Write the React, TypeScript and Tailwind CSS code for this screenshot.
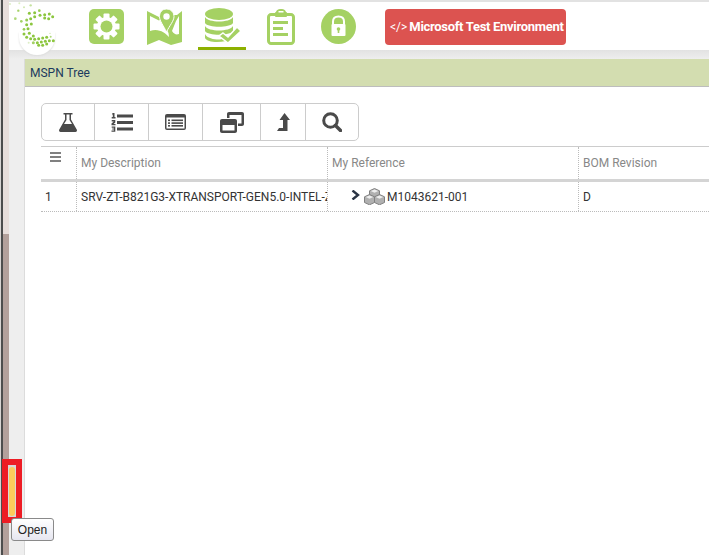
const G = "#a5d163";
const D = "#4a4a4a";

const dots: [number, number, number, number][] = [
  [30,12,3,.3],[58,10,3,.3],[72,22,3,.4],[92,16,3.5,.5],[55,32,3.5,.8],[88,40,4.5,1],[104,38,4.5,1],[118,32,4,.9],[134,44,4.5,1],[148,42,4.5,1],[158,50,4.5,1],
  [46,56,4,.7],[64,64,4,.8],[80,60,4.5,.9],[92,56,4.5,1],[104,50,4.5,1],[120,46,4.5,1],[134,54,4.5,1],[146,56,4.5,1],[80,74,4.5,1],[94,72,4.5,1],[84,86,4.5,1],[72,88,4,.9],[72,102,4.5,1],
  [88,100,4.5,1],[100,108,4.5,1],[80,112,4.5,1],[92,116,4.5,1],[104,118,4.5,1],[116,116,4.5,1],[128,114,4.5,1],[140,112,4.5,1],[152,110,3,.7],[160,122,4.5,1],[148,122,4.5,1],
  [136,124,4.5,1],[124,126,4.5,1],[112,128,4.5,1],[100,128,4.5,.8],[128,136,4.5,1],[116,136,4.5,1],[140,132,4.5,1],[150,100,2,.5],[86,128,3,.3],
];

function Logo() {
  return (
    <svg width="70" height="70" viewBox="0 0 210 210" className="absolute left-[-9px] top-[-2px]">
      {dots.map(([x, y, r, o], i) => <circle key={i} cx={x} cy={y} r={r} fill="#8cc63f" opacity={o} />)}
    </svg>
  );
}

function Gear() {
  const teeth = [0, 45, 90, 135];
  return (
    <svg width="35" height="35" viewBox="0 0 35 35">
      <rect width="35" height="35" rx="5" fill={G} />
      {teeth.map((a) => <rect key={a} x="14.500" y="4.500" width="6" height="26" rx="1" fill="#fff" transform={`rotate(${a} 17.5 17.5)`} />)}
      <circle cx="17.500" cy="17.500" r="9.500" fill="#fff" />
      <circle cx="17.500" cy="17.500" r="6" fill={G} />
    </svg>
  );
}

function MapIcon() {
  return (
    <svg width="36" height="36" viewBox="0 0 36 36">
      <path d="M0 2 L12 8 L16 6 L30 6 L35 2 V33 L24 36 L12 31 L0 36 Z" fill={G} />
      <path d="M3 7 L12 11.500 L15 9.500 C16 14 19 19 21.500 24 L22 28 C18 24 12 19 3 22 Z" fill="#fff" />
      <path d="M25 22 L29 12 L32 7 V25 C29 26 27 25 25 22 Z" fill="#fff" />
      <path d="M19.500 0 C15 0 12.500 3.500 12.500 7.500 C12.500 12 16.500 16.500 19.500 23 C22.500 16.500 27 12 27 7.500 C27 3.500 24 0 19.500 0 Z" fill={G} stroke="#fff" strokeWidth="1" />
      <circle cx="19.500" cy="7.500" r="3.200" fill="#fff" />
    </svg>
  );
}

function Db() {
  return (
    <svg width="36" height="35" viewBox="0 0 36 35">
      <ellipse cx="14" cy="6" rx="14" ry="6" fill={G} />
      <path d="M0 9 C3 15 25 15 28 9 V15 C25 20 3 20 0 15 Z" fill={G} />
      <path d="M0 18 C3 24 25 24 28 18 V23 C25 28 3 28 0 23 Z" fill={G} />
      <path d="M0 26 C3 32 15 32 18 31 L21 33 C12 35 2 34 0 30 Z" fill={G} />
      <path d="M18 25 L23 29 L32 19 L36 23 L23 35 L14 28 Z" fill={G} stroke="#fff" strokeWidth="1.500" />
    </svg>
  );
}

function Clip() {
  return (
    <svg width="28" height="36" viewBox="0 0 28 36">
      <path d="M4 4 H9 C9 1 11 0 14 0 C17 0 19 1 19 4 H24 C26 4 28 6 28 8 V32 C28 34 26 36 24 36 H4 C2 36 0 34 0 32 V8 C0 6 2 4 4 4 Z" fill={G} />
      <rect x="3" y="7" width="22" height="26" rx="1" fill="#fff" />
      <rect x="8" y="3" width="12" height="5" rx="1" fill={G} />
      <rect x="11.500" y="2" width="5" height="1.500" fill="#fff" />
      <rect x="6" y="12" width="15" height="3" fill={G} />
      <rect x="6" y="18" width="10" height="3" fill={G} />
      <rect x="6" y="24" width="15" height="3" fill={G} />
    </svg>
  );
}

function Lock() {
  return (
    <svg width="35" height="35" viewBox="0 0 35 35">
      <circle cx="17.500" cy="17.500" r="17.500" fill={G} />
      <path d="M12 16 V12.500 C12 9 14.500 7.500 17.500 7.500 C20.500 7.500 23 9 23 12.500 V16" fill="none" stroke="#fff" strokeWidth="2" />
      <rect x="10.500" y="15" width="14" height="12" rx="1" fill="#fff" />
      <circle cx="17.500" cy="20" r="1.800" fill={G} />
      <rect x="16.700" y="20" width="1.600" height="4" fill={G} />
    </svg>
  );
}

function Flask() {
  return (
    <svg width="18" height="19" viewBox="0 0 18 19">
      <path d="M4.500 0 H13.500 V1.500 H12 V6.500 L18 17 C18 18 17.500 19 16.500 19 H1.500 C.5 19 0 18 0 17 L6 6.500 V1.500 H4.500 Z" fill={D} />
      <path d="M7.500 1.500 H10.500 V7 L13 11 H5 L7.500 7 Z" fill="#fff" />
    </svg>
  );
}

function ListOl() {
  return (
    <svg width="22" height="19" viewBox="0 0 22 19">
      <rect x="6" y="1.500" width="16" height="3" fill={D} />
      <rect x="6" y="8" width="16" height="3" fill={D} />
      <rect x="6" y="14.500" width="16" height="3" fill={D} />
      <path d="M1.500 0 H3.500 V4 H4.500 V5.500 H.7 V4 H1.800 V1.500 H1 Z" fill={D} />
      <path d="M.7 7 H4.300 V9.500 L2.500 11 H4.500 V12.300 H.5 V10.500 L2.800 8.500 H.7 Z" fill={D} />
      <path d="M.7 13.500 H4.300 V18.800 H.5 V17.600 H2.900 V16.600 H1.200 V15.500 H2.900 V14.700 H.7 Z" fill={D} />
    </svg>
  );
}

function ListAlt() {
  return (
    <svg width="21" height="16" viewBox="0 0 21 16">
      <rect width="21" height="16" rx="2" fill={D} />
      <rect x="1.500" y="3.500" width="18" height="11" fill="#fff" />
      <rect x="3" y="5.500" width="2" height="1.600" fill={D} />
      <rect x="3" y="8.300" width="2" height="1.600" fill={D} />
      <rect x="3" y="11" width="2" height="1.600" fill={D} />
      <rect x="6.500" y="5.500" width="11.500" height="1.600" fill={D} />
      <rect x="6.500" y="8.300" width="11.500" height="1.600" fill={D} />
      <rect x="6.500" y="11" width="11.500" height="1.600" fill={D} />
    </svg>
  );
}

function Restore() {
  return (
    <svg width="24" height="21" viewBox="0 0 24 21">
      <path d="M7 2 C7 .8 7.800 0 9 0 H22 C23.200 0 24 .8 24 2 V12 C24 13.200 23.200 14 22 14 H18 V11.500 H21.500 V3 H9.500 V6 H7 Z" fill={D} />
      <path d="M2 7 H15 C16.200 7 17 7.800 17 9 V19 C17 20.200 16.200 21 15 21 H2 C.8 21 0 20.200 0 19 V9 C0 7.800 .8 7 2 7 Z M2.500 13 V18.500 H14.500 V13 Z" fill={D} />
    </svg>
  );
}

function LevelUp() {
  return (
    <svg width="13" height="18" viewBox="0 0 13 18">
      <path d="M7.500 0 L13 7 H10.500 V18 H0 L2 15 H6 V7 H2.500 Z" fill={D} />
    </svg>
  );
}

function Search() {
  return (
    <svg width="20" height="20" viewBox="0 0 20 20">
      <circle cx="8.500" cy="8.500" r="6.800" fill="none" stroke={D} strokeWidth="3" />
      <path d="M13.500 13.500 L18.500 18.500" stroke={D} strokeWidth="3.500" strokeLinecap="round" />
    </svg>
  );
}

function Cubes() {
  const cube = (x: number, y: number) => (
    <g transform={`translate(${x} ${y})`}>
      <path d="M5.500 .5 L10.500 2.800 V8.500 L5.500 10.800 L.5 8.500 V2.800 Z" fill="#b0b0b0" stroke="#808080" strokeWidth="1" />
      <path d="M5.500 1.500 L9.300 3 L5.500 4.700 L1.700 3 Z" fill="#eeeeee" />
    </g>
  );
  return (
    <svg width="21" height="17" viewBox="0 0 21 17">
      {cube(5, 0)}
      {cube(0, 6)}
      {cube(10, 6)}
    </svg>
  );
}

const tools = [
  { w: "w-[53px]", icon: <Flask /> },
  { w: "w-[54px]", icon: <ListOl /> },
  { w: "w-[54px]", icon: <ListAlt /> },
  { w: "w-[58px]", icon: <Restore /> },
  { w: "w-[45px]", icon: <LevelUp /> },
  { w: "flex-1", icon: <Search /> },
];

export default function App() {
  return (
    <div className="relative flex h-[555px] w-[709px] overflow-hidden bg-white font-['Roboto',sans-serif]">
      <div className="flex w-[9px] shrink-0 flex-col">
        <div className="flex h-[234px]">
          <div className="w-[1px] shrink-0 bg-[#d8d4d2]" />
          <div className="w-[2px] shrink-0 bg-[#4d4d4d]" />
          <div className="flex-1 bg-[#e8dedb]" />
        </div>
        <div className="flex flex-1">
          <div className="w-[1px] shrink-0 bg-[#d8d4d2]" />
          <div className="w-[2px] shrink-0 bg-[#4d4d4d]" />
          <div className="flex-1 bg-[#b3a09b]" />
        </div>
      </div>

      <div className="flex min-w-0 flex-1 flex-col">
        <div className="h-[2px] shrink-0 bg-[#e2e2e2]" />
        <header className="relative z-10 flex h-[48px] shrink-0 items-start bg-white">
          <div className="absolute left-[10px] top-[30px] h-[23px] w-[36px] rounded-b-[18px] bg-white shadow-[0_1px_2px_#ddd]" />
          <Logo />
          <div className="relative ml-[80px] mt-[7px] flex items-start">
            <div className="w-[58px]"><Gear /></div>
            <div className="w-[51px]"><MapIcon /></div>
            <div className="-mt-[1px] mr-[21px] flex h-[42px] w-[48px] flex-col items-start border-b-[3px] border-[#8db000] pl-[7px]">
              <Db />
            </div>
            <div className="w-[54px]"><Clip /></div>
            <div className="w-[64px]"><Lock /></div>
            <div className="flex h-[36px] w-[181px] items-center gap-[2px] whitespace-nowrap rounded-[4px] bg-[#dc5350] pl-[5px] text-[13px] font-bold text-white">
              <span className="text-[12px] font-normal">&lt;/&gt;</span>
              <span className="tracking-[-0.3px]">Microsoft Test Environment</span>
            </div>
          </div>
        </header>

        <main className="flex min-h-0 flex-1 flex-col bg-[#eeeeee]">
          <div className="h-[9px] shrink-0 bg-gradient-to-b from-[#e2e2e2] to-[#eeeeee]" />
          <section className="ml-[15px] flex min-h-0 flex-1 flex-col border-l border-[#dcdcdc] bg-white">
            <div className="flex h-[28px] shrink-0 items-center border-b border-[#bdbdbd] bg-[#d3ddb0] pl-[5px] text-[12px] text-[#1c3a5e]">
              MSPN Tree
            </div>
            <div className="ml-[16px] mt-[16px] flex h-[38px] w-[318px] shrink-0 overflow-hidden rounded-[5px] border border-[#cccccc]">
              {tools.map((t, i) => (
                <div key={i} className={`${t.w} flex items-center justify-center border-r border-[#cccccc] last:border-r-0`}>
                  {t.icon}
                </div>
              ))}
            </div>
            <div className="ml-[16px] mt-[5px] text-[12px]">
              <div className="flex h-[36px] border-t border-[#cccccc] border-b-[3px] border-b-[#d4d4d4] text-[#888888]">
                <div className="flex w-[36px] justify-center border-r border-dotted border-[#bbbbbb] pr-[6px] pt-[5px]">
                  <svg width="11" height="10" viewBox="0 0 11 10" fill="#808080"><rect width="11" height="2" /><rect y="4" width="11" height="2" /><rect y="8" width="11" height="2" /></svg>
                </div>
                <div className="flex w-[251px] items-center border-r border-dotted border-[#bbbbbb] pl-[4px]">My Description</div>
                <div className="flex w-[251px] items-center border-r border-dotted border-[#bbbbbb] pl-[4px]">My Reference</div>
                <div className="flex flex-1 items-center pl-[4px]">BOM Revision</div>
              </div>
              <div className="flex h-[30px] items-center border-b border-dotted border-[#bbbbbb] text-[#333333]">
                <div className="flex h-full w-[36px] items-center border-r border-dotted border-[#bbbbbb] pl-[4px]">1</div>
                <div className="flex h-full w-[251px] items-center overflow-hidden whitespace-nowrap border-r border-dotted border-[#bbbbbb] pl-[4px]">SRV-ZT-B821G3-XTRANSPORT-GEN5.0-INTEL-Z</div>
                <div className="flex h-full w-[251px] items-center border-r border-dotted border-[#bbbbbb] pl-[23px]">
                  <svg width="9" height="10" viewBox="0 0 9 10" className="mb-[4px] mr-[4px]"><path d="M1.500 .5 L7 5 L1.500 9.500" fill="none" stroke="#2a3444" strokeWidth="2.400" /></svg>
                  <Cubes />
                  <span className="ml-[2px]">M1043621-001</span>
                </div>
                <div className="flex h-full flex-1 items-center pl-[4px]">D</div>
              </div>
            </div>
          </section>
        </main>
      </div>

      <div className="absolute left-[2px] top-[459px] flex h-[64px] w-[20px] items-center justify-center border-[6px] border-[#ed1c24] bg-[#d8d8d8]">
        <div className="h-[49px] w-[6px] rounded-[3px] bg-[#fccb5c]" />
      </div>
      <div className="absolute left-[11px] top-[518px] flex h-[23px] w-[43px] items-center justify-center rounded-[3px] border border-[#8a8a8a] bg-gradient-to-b from-white to-[#e6e6f0] font-['Liberation_Sans',sans-serif] text-[12px] text-[#222]">
        Open
      </div>
    </div>
  );
}
